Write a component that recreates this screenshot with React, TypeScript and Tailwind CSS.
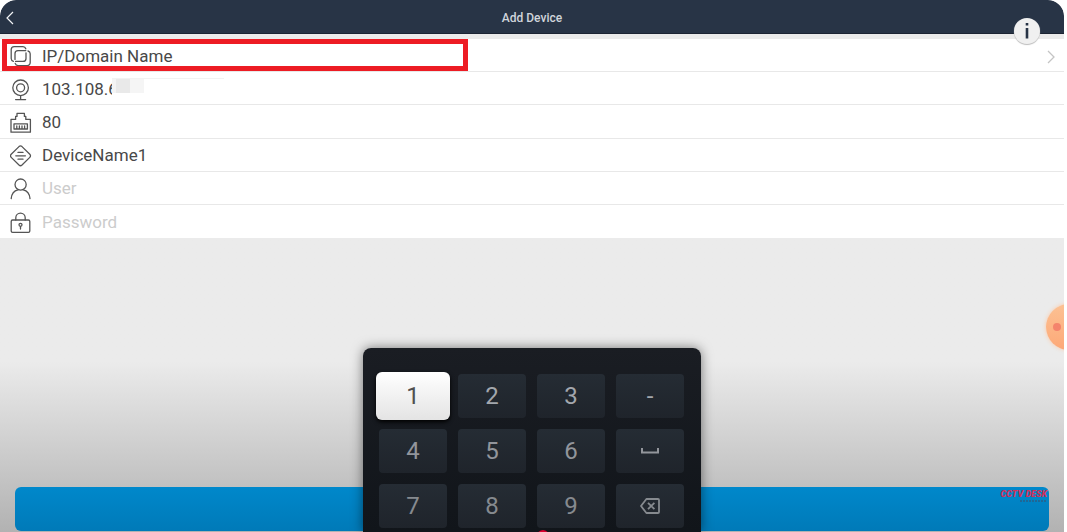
import type { ReactNode } from "react";

type Field = {
    id: string;
    label: string;
    value?: string;
    placeholder?: string;
    type?: string;
    icon: ReactNode;
};

function Icon({ children }: { children: ReactNode }) {
    return (
        <svg
            viewBox="0 0 22 22"
            className="h-[22px] w-[22px] shrink-0 text-[#555555]"
            fill="none"
            stroke="currentColor"
            strokeWidth="1.3"
            strokeLinecap="round"
            strokeLinejoin="round"
            aria-hidden="true"
        >
            {children}
        </svg>
    );
}

const typeIcon = (
    <Icon>
        <path d="M3.4 15.4A3 3 0 0 1 1.2 12.6V3.6A3 3 0 0 1 4.2.7H13A3 3 0 0 1 15.8 2.8" />
        <path d="M18 5A3 3 0 0 1 20.2 7.8V16.6A3 3 0 0 1 17.2 19.6H8A3 3 0 0 1 5.2 17.4" />
        <path d="M5 13.4V7.6A3 3 0 0 1 8 4.6H15.8" />
        <path d="M16 6.8V12.400A3 3 0 0 1 13 15.4H5.6" />
    </Icon>
);

const fields: Field[] = [
    {
        id: "address",
        label: "Address",
        value: "103.108.6",
        icon: (
            <Icon>
                <circle cx="10.6" cy="8.8" r="7.8" />
                <circle cx="10.6" cy="8.8" r="4" />
                <path d="M10.6 16.8v3.6M5.6 20.6h10" />
            </Icon>
        ),
    },
    {
        id: "port",
        label: "Port",
        value: "80",
        icon: (
            <Icon>
                <path d="M1 7.4h4.6V4.4H7V1.4h7.4v3h1.4v3h4.6v12.8H1z" />
                <path d="M4 17v-5.2h13.4V17zM6.8 14v3M9.4 14v3M12 14v3M14.6 14v3" />
            </Icon>
        ),
    },
    {
        id: "name",
        label: "Device name",
        value: "DeviceName1",
        icon: (
            <Icon>
                <path d="M9 1.6a2.2 2.2 0 0 1 3 0l7.8 7.6a2.2 2.2 0 0 1 0 3.2L12 20a2.2 2.2 0 0 1-3 0l-7.8-7.6a2.2 2.2 0 0 1 0-3.2z" />
                <path d="M8 7.4h5M5.8 10.8h9.6M8 14.2h5" />
            </Icon>
        ),
    },
    {
        id: "user",
        label: "User",
        placeholder: "User",
        icon: (
            <Icon>
                <circle cx="10.6" cy="6.6" r="5.6" />
                <path d="M1.2 20.6c.4-4.8 3-8 6.8-8.8M20 20.6c-.4-4.8-3-8-6.8-8.8" />
            </Icon>
        ),
    },
    {
        id: "password",
        label: "Password",
        placeholder: "Password",
        type: "password",
        icon: (
            <Icon>
                <rect x="1.2" y="8" width="18.6" height="12.4" rx="1.4" />
                <path d="M5.8 8V5.8a4.7 4.7 0 0 1 9.4 0V8M10.5 14.4v2.6" />
                <circle cx="10.5" cy="12.8" r="1.5" />
            </Icon>
        ),
    },
];

const spaceIcon = (
    <svg viewBox="0 0 18 6" className="h-1.5 w-[18px]" fill="none" stroke="currentColor" strokeWidth="2" aria-hidden="true">
        <path d="M1 0v4.4h16V0" />
    </svg>
);

const deleteIcon = (
    <svg viewBox="0 0 20 16" className="h-4 w-5" fill="none" stroke="currentColor" strokeWidth="1.8" strokeLinejoin="round" aria-hidden="true">
        <path d="M6.4 1H18a1 1 0 0 1 1 1v12a1 1 0 0 1-1 1H6.4L1 8z" />
        <path d="M8 4.8l6.4 6.4M14.4 4.8L8 11.2" />
    </svg>
);

const keys: { name: string; face: ReactNode }[] = [
    { name: "1", face: "1" },
    { name: "2", face: "2" },
    { name: "3", face: "3" },
    { name: "-", face: "-" },
    { name: "4", face: "4" },
    { name: "5", face: "5" },
    { name: "6", face: "6" },
    { name: "Space", face: spaceIcon },
    { name: "7", face: "7" },
    { name: "8", face: "8" },
    { name: "9", face: "9" },
    { name: "Backspace", face: deleteIcon },
];

function Header() {
    return (
        <header className="relative flex h-[34px] items-center justify-center rounded-t-2xl border-b border-[#1c2433] bg-[#283446] pt-0.5">
            <button type="button" aria-label="Back" className="absolute left-1 flex h-6 w-4 items-center text-gray-100">
                <svg viewBox="0 0 12 14" className="h-3.5 w-3" fill="none" stroke="currentColor" strokeWidth="1.2" aria-hidden="true">
                    <path d="M9 1L3 7l6 6" />
                </svg>
            </button>
            <h1 className="text-xs font-medium text-[#d0d4db]">Add Device</h1>
            <button
                type="button"
                aria-label="Info"
                className="absolute top-[18px] right-6 z-10 flex h-[26px] w-[26px] items-center justify-center rounded-full bg-[#f0f0f0] text-[#283446] shadow-[0_1px_1px_#bbbbbb]"
            >
                <svg viewBox="0 0 4 16" className="h-4 w-1" fill="currentColor" aria-hidden="true">
                    <path d="M.7 0h2.6v2.6H.7zM.7 5h2.6v10.5H.7z" />
                </svg>
            </button>
        </header>
    );
}

function DeviceForm() {
    return (
        <form className="mt-[5px] grid h-[199px] grid-rows-6 divide-y divide-[#e8e8e8] bg-white text-[17px] text-[#484848]">
            <div className="relative flex items-center pt-[3px] pr-2">
                <button type="button" className="flex h-full flex-1 items-center gap-2.5 pl-2.5 text-left">
                    {typeIcon}
                    IP/Domain Name
                </button>
                <svg viewBox="0 0 10 14" className="h-3.5 w-2.5" fill="none" stroke="#c4c4c4" strokeWidth="1.3" aria-hidden="true">
                    <path d="M2 1l6 6-6 6" />
                </svg>
                <div className="pointer-events-none absolute inset-y-0 left-0.5 w-[466px] border-[5px] border-[#ed1c24]" />
            </div>
            {fields.map((field) => (
                <div key={field.id} className="relative flex items-center gap-2.5 pt-[3px] pl-2.5">
                    <label htmlFor={field.id} aria-label={field.label}>
                        {field.icon}
                    </label>
                    <input
                        id={field.id}
                        type={field.type ?? "text"}
                        defaultValue={field.value}
                        placeholder={field.placeholder}
                        className="min-w-0 flex-1 bg-transparent outline-none placeholder:text-[#cccccc]"
                    />
                    {field.id === "address" && (
                        <div className="absolute top-1.5 left-[112px] flex h-6 w-28 items-start border-t border-[#f2f2f2] bg-white">
                            <span className="h-3.5 w-1 bg-[#f4f4f4]" />
                            <span className="h-3.5 w-3.5 bg-[#e9e9e9]" />
                            <span className="h-3.5 w-3.5 bg-[#f5f5f5]" />
                        </div>
                    )}
                </div>
            ))}
        </form>
    );
}

function Keypad() {
    return (
        <div className="absolute bottom-0 left-1/2 grid -translate-x-1/2 grid-cols-[repeat(4,68px)] gap-[11px] overflow-hidden rounded-t-lg bg-linear-to-b from-[#1a1d23] to-[#11151a] pt-[26px] pr-[17px] pb-1 pl-4 shadow-[0_0_12px_#00000080]">
            {keys.map((key) =>
                key.name === "1" ? (
                    <button
                        key={key.name}
                        type="button"
                        className="-mx-[3px] -my-0.5 flex h-12 items-center justify-center rounded-md bg-linear-to-b from-white to-[#e4e4e4] text-2xl text-[#505050] shadow-[0_2px_4px_#000000]"
                    >
                        {key.face}
                    </button>
                ) : (
                    <button
                        key={key.name}
                        type="button"
                        aria-label={key.name}
                        className="flex h-11 items-center justify-center rounded bg-linear-to-b from-[#252c34] to-[#1f242b] text-2xl text-[#a3a7ad] nth-[n+5]:text-[#92959b] nth-[n+9]:text-[#868a8f]"
                    >
                        {key.face}
                    </button>
                ),
            )}
            <span className="absolute -bottom-2.5 left-[174px] h-3 w-3 rounded-full bg-[#d8002f]" />
        </div>
    );
}

export default function App() {
    return (
        <div className="bg-white pr-[3px] font-[Roboto,sans-serif]">
            <div className="relative flex min-h-screen flex-col overflow-hidden rounded-t-2xl bg-linear-to-b from-[#ebebeb] from-68% to-[#b2b2b2]">
                <Header />
                <DeviceForm />
                <div className="mt-auto flex min-h-72 flex-col justify-end px-[15px] pb-px">
                    <button
                        type="button"
                        aria-label="Add"
                        className="flex h-11 items-start justify-end rounded-md bg-linear-to-b from-[#0088cb] to-[#007ab8] pt-px pr-0.5"
                    >
                        <span className="flex flex-col items-end">
                            <span className="text-[9px] leading-3 font-black text-[#d0305a] italic">CCTV DESK</span>
                            <svg viewBox="0 0 27 2" className="h-0.5 w-[27px]" stroke="#2a5f86" strokeWidth="1.5" strokeDasharray="2 1" aria-hidden="true">
                                <path d="M0 1h27" />
                            </svg>
                        </span>
                    </button>
                </div>
                <button
                    type="button"
                    aria-label="Assistant"
                    className="absolute top-[304px] -right-7 h-[46px] w-[46px] rounded-full bg-linear-to-b from-[#fcc193] to-[#fda877] shadow-[0_0_4px_#fdc9a5]"
                >
                    <span className="absolute top-[19px] left-[7px] h-2 w-2 rounded-full bg-[#f4846c]" />
                </button>
                <Keypad />
            </div>
        </div>
    );
}
